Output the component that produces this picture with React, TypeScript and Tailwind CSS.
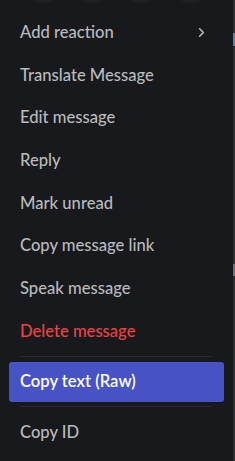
import { ChevronRight } from "lucide-react";

const items = [
  "Translate Message",
  "Edit message",
  "Reply",
  "Mark unread",
  "Copy message link",
  "Speak message",
];

function Item({ label, className = "" }: { label: string; className?: string }) {
  return (
    <div className="py-[1.33px]">
      <div className={"h-10 px-[11px] flex items-center rounded-[3px] " + className}>
        <span>{label}</span>
      </div>
    </div>
  );
}

function Separator() {
  return <div className="h-px bg-[#2b2d31] mx-[12px] my-[3.5px]" />;
}

export default function App() {
  return (
    <div className="w-[235px] h-[461px] flex bg-[#2b2d31] overflow-hidden">
      <div
        className="w-[233px] h-full bg-[#18191c] px-[9px] pt-[11px] text-[16.6px] text-[#b9bbbe] font-medium leading-none"
        style={{ fontFamily: "Lato, 'Noto Sans', sans-serif" }}
      >
        {/* quick reaction row, mostly cut off */}
        <div className="flex justify-around -mt-[50px] mb-[8px] px-[8px]">
          {[0, 1, 2, 3].map((i) => (
            <div key={i} className="w-[42px] h-[42px] rounded-full bg-[#1f2023]" />
          ))}
        </div>
        <div className="py-[1.33px]">
          <div className="h-10 px-[11px] flex items-center justify-between">
            <span>Add reaction</span>
            <ChevronRight className="w-[15px] h-[15px] mr-[4px]" strokeWidth={2.6} />
          </div>
        </div>
        {items.map((t) => (
          <Item key={t} label={t} />
        ))}
        <Item label="Delete message" className="text-[#ed4245]" />
        <Separator />
        <Item label="Copy text (Raw)" className="bg-[#4752c4] text-white font-semibold" />
        <Separator />
        <Item label="Copy ID" />
      </div>
      <div className="w-[2px] h-full flex flex-col">
        <div className="h-[33px]" />
        <div className="h-[13px] bg-[#5a7fa8]" />
        <div className="h-[218px]" />
        <div className="h-[12px] bg-[#6b6e74]" />
      </div>
    </div>
  );
}
